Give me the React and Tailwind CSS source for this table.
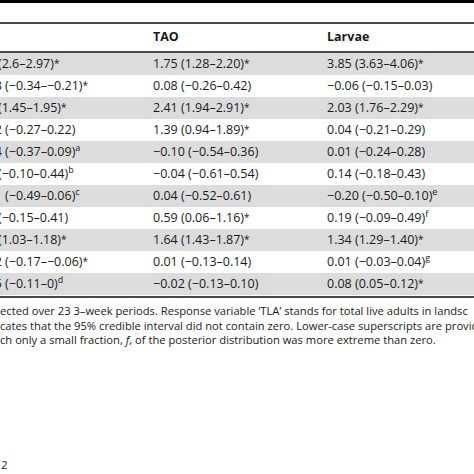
import React from "react";

const rows = [
  [["2.79 (2.6–2.97)", "*"], ["1.75 (1.28–2.20)", "*"], ["3.85 (3.63–4.06)", "*"]],
  [["−0.28 (−0.34–−0.21)", "*"], ["0.08 (−0.26–0.42)", ""], ["−0.06 (−0.15–0.03)", ""]],
  [["1.70 (1.45–1.95)", "*"], ["2.41 (1.94–2.91)", "*"], ["2.03 (1.76–2.29)", "*"]],
  [["−0.02 (−0.27–0.22)", ""], ["1.39 (0.94–1.89)", "*"], ["0.04 (−0.21–0.29)", ""]],
  [["−0.14 (−0.37–0.09)", "a"], ["−0.10 (−0.54–0.36)", ""], ["0.01 (−0.24–0.28)", ""]],
  [["0.17 (−0.10–0.44)", "b"], ["−0.04 (−0.61–0.54)", ""], ["0.14 (−0.18–0.43)", ""]],
  [["−0.21 (−0.49–0.06)", "c"], ["0.04 (−0.52–0.61)", ""], ["−0.20 (−0.50–0.10)", "e"]],
  [["0.13 (−0.15–0.41)", ""], ["0.59 (0.06–1.16)", "*"], ["0.19 (−0.09–0.49)", "f"]],
  [["1.11 (1.03–1.18)", "*"], ["1.64 (1.43–1.87)", "*"], ["1.34 (1.29–1.40)", "*"]],
  [["−0.12 (−0.17–−0.06)", "*"], ["0.01 (−0.13–0.14)", ""], ["0.01 (−0.03–0.04)", "g"]],
  [["−0.05 (−0.11–0)", "d"], ["−0.02 (−0.13–0.10)", ""], ["0.08 (0.05–0.12)", "*"]],
];

function Cell({ c }) {
  return (
    <span className="whitespace-nowrap">
      {c[0]}
      {c[1] === "*" ? (
        <span className="text-[10px] relative -top-[1px]">*</span>
      ) : c[1] ? (
        <sup className="text-[9px]">{c[1]}</sup>
      ) : null}
    </span>
  );
}

export default function App() {
  return (
    <div
      className="w-[474px] h-[474px] overflow-hidden bg-white text-[#1a1a1a] flex flex-col"
      style={{ fontFamily: '"Open Sans", "Noto Sans", sans-serif' }}
    >
      <div className="h-[3px] bg-black shrink-0" />
      <div className="h-[19px] shrink-0" />
      <div className="h-[2px] bg-[#4a4a4a] shrink-0" />
      <div className="h-[27px] shrink-0 flex items-center text-[12.5px] font-bold">
        <div className="w-[153px] shrink-0" />
        <div className="w-[174px] shrink-0">TAO</div>
        <div className="flex-1">Larvae</div>
      </div>
      <div className="h-[2px] bg-[#4a4a4a] shrink-0" />
      <div className="flex flex-col text-[12.5px]">
        {rows.map((r, i) => (
          <div
            key={i}
            className={
              "h-[22px] flex items-center " + (i % 2 === 0 ? "bg-[#dcdcdc]" : "bg-white")
            }
          >
            <div className="w-[153px] shrink-0 overflow-hidden">
              <div className="-ml-[30px]">
                <Cell c={r[0]} />
              </div>
            </div>
            <div className="w-[174px] shrink-0">
              <Cell c={r[1]} />
            </div>
            <div className="flex-1">
              <Cell c={r[2]} />
            </div>
          </div>
        ))}
      </div>
      <div className="h-[2px] bg-[#4a4a4a] shrink-0 mt-[1px]" />
      <div className="pt-[6px] text-[11.2px] leading-[14.5px] whitespace-nowrap overflow-hidden">
        <div>ected over 23 3–week periods. Response variable ‘TLA’ stands for total live adults in landsc</div>
        <div>cates that the 95% credible interval did not contain zero. Lower-case superscripts are provic</div>
        <div>
          ch only a small fraction, <i>f</i>, of the posterior distribution was more extreme than zero.
        </div>
      </div>
      <div className="flex-1" />
      <div className="text-[11.5px] leading-[14px] pl-[1px] pb-[2px]">2</div>
    </div>
  );
}
